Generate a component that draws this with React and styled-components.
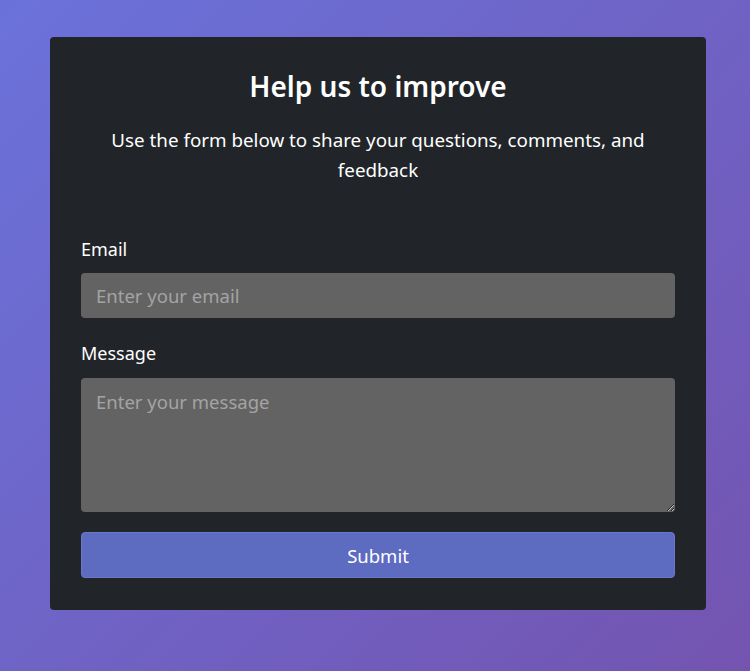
import React from "react";
import styled, { createGlobalStyle } from "styled-components";

const Global = createGlobalStyle`
  html, body { margin: 0; padding: 0; }
  body {
    min-height: 671px;
    background: linear-gradient(135deg, #6a72da 0%, #7454b0 100%);
    font-family: "Noto Sans", "Open Sans", sans-serif;
    color: #fff;
  }
  * { box-sizing: border-box; }
`;

const Page = styled.div`
  padding: 37px 44px 61px 50px;
`;

const Card = styled.form`
  background: #212529;
  border-radius: 4px;
  padding: 32px 31px 32px 31px;
  display: flex;
  flex-direction: column;
`;

const Title = styled.h2`
  margin: 0;
  text-align: center;
  font-size: 28px;
  line-height: 34px;
  font-weight: 600;
`;

const Subtitle = styled.p`
  margin: 22px 0 0;
  text-align: center;
  font-size: 18.8px;
  line-height: 30px;
  font-weight: 400;
`;

const Field = styled.div`
  display: flex;
  flex-direction: column;
  margin-top: ${(p) => p.$mt}px;
`;

const Label = styled.label`
  font-size: 18px;
  line-height: 27px;
  margin-bottom: ${(p) => p.$mb}px;
`;

const inputBase = `
  width: 100%;
  background: #636363;
  border: none;
  border-radius: 4px;
  color: #fff;
  font-family: inherit;
  font-size: 18.5px;
  padding: 0 15px;
  outline: none;
  &::placeholder { color: #a4a4a4; }
`;

const Input = styled.input`
  ${inputBase}
  height: 45px;
`;

const TextArea = styled.textarea`
  ${inputBase}
  height: 134px;
  padding-top: 10px;
  line-height: 27px;
  resize: vertical;
  display: block;
`;

const Button = styled.button`
  margin-top: 20px;
  height: 46px;
  width: 100%;
  background: #5d6bc1;
  border: 1px solid #6a78cc;
  border-radius: 4px;
  color: #fff;
  font-family: inherit;
  font-size: 18.5px;
  cursor: pointer;
`;

export default function App() {
  return (
    <>
      <Global />
      <Page>
        <Card onSubmit={(e) => e.preventDefault()}>
          <Title>Help us to improve</Title>
          <Subtitle>
            Use the form below to share your questions, comments, and feedback
          </Subtitle>
          <Field $mt={51}>
            <Label $mb={10}>Email</Label>
            <Input type="email" placeholder="Enter your email" />
          </Field>
          <Field $mt={22}>
            <Label $mb={11}>Message</Label>
            <TextArea placeholder="Enter your message" />
          </Field>
          <Button type="submit">Submit</Button>
        </Card>
      </Page>
    </>
  );
}
